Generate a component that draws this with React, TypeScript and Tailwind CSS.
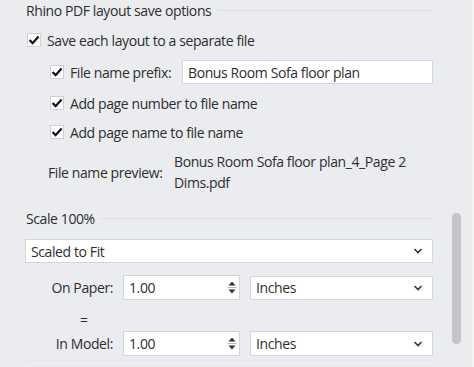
import React from "react";

const font = { fontFamily: '"Open Sans", "Noto Sans", sans-serif' };

function Check() {
  return (
    <span className="flex h-[14px] w-[14px] shrink-0 items-center justify-center border border-[#cdd0d4] bg-white">
      <svg width="12" height="12" viewBox="0 0 12 12">
        <path d="M1.6 6 L4.6 9.2 L10.6 2.4" fill="none" stroke="#111" strokeWidth="2.2" />
      </svg>
    </span>
  );
}

function Chevron() {
  return (
    <svg width="10" height="6" viewBox="0 0 10 6" className="ml-auto">
      <path d="M1.5 1 L5 4.5 L8.5 1" fill="none" stroke="#333" strokeWidth="1.6" />
    </svg>
  );
}

function Select({ value, className }: { value: string; className: string }) {
  return (
    <div className={"flex items-center border border-[#d3d6da] bg-white pl-[5px] pr-[9px] " + className}>
      <span>{value}</span>
      <Chevron />
    </div>
  );
}

function Spin({ value }: { value: string }) {
  return (
    <div className="flex h-[25px] w-[117px] items-stretch border border-[#d3d6da] bg-white">
      <span className="flex flex-1 items-center pl-[5px]">{value}</span>
      <span className="flex w-[14px] flex-col items-center justify-center gap-[1px]">
        <svg width="8" height="5" viewBox="0 0 8 5">
          <path d="M0.5 4.5 L4 0.5 L7.5 4.5 Z" fill="#333" />
        </svg>
        <span className="h-px w-[10px] bg-[#b9bcc0]" />
        <svg width="8" height="5" viewBox="0 0 8 5">
          <path d="M0.5 0.5 L4 4.5 L7.5 0.5 Z" fill="#333" />
        </svg>
      </span>
    </div>
  );
}

export default function App() {
  return (
    <div
      className="flex h-[367px] w-[474px] overflow-hidden bg-[#f4f4f5] text-[14px] tracking-[-0.4px] text-[#2e2e2e]"
      style={font}
    >
      <div className="flex w-[472px] bg-[#ebecef]">
        <div className="flex w-[433px] flex-col pl-[26px]">
          {/* Header */}
          <div className="flex h-[20px] items-center gap-[6px]">
            <span className="whitespace-nowrap">Rhino PDF layout save options</span>
            <span className="h-px flex-1 bg-[#dcdee2]" />
          </div>

          <div className="mt-[10px] flex h-[20px] items-center gap-[6px] pl-[1px]">
            <Check />
            <span>Save each layout to a separate file</span>
          </div>

          <div className="mt-[10px] flex h-[24px] items-center pl-[24px]">
            <Check />
            <span className="ml-[6px] w-[112px]">File name prefix:</span>
            <div className="flex h-[24px] flex-1 items-center border border-[#d3d6da] bg-white pl-[5px]">
              Bonus Room Sofa floor plan
            </div>
          </div>

          <div className="mt-[9px] flex h-[20px] items-center gap-[6px] pl-[24px]">
            <Check />
            <span>Add page number to file name</span>
          </div>

          <div className="mt-[9px] flex h-[20px] items-center gap-[6px] pl-[24px]">
            <Check />
            <span>Add page name to file name</span>
          </div>

          <div className="mt-[9px] flex items-center pl-[22px]">
            <span className="w-[126px]">File name preview:</span>
            <span className="w-[245px] leading-[21px]">Bonus Room Sofa floor plan_4_Page 2 Dims.pdf</span>
          </div>

          {/* Scale */}
          <div className="mt-[15px] flex h-[20px] items-center gap-[6px]">
            <span className="whitespace-nowrap">Scale 100%</span>
            <span className="h-px flex-1 bg-[#dcdee2]" />
          </div>

          <Select value="Scaled to Fit" className="-ml-px mt-[11px] h-[24px]" />

          <div className="mt-[12px] flex items-center">
            <span className="w-[87px] text-right">On Paper:</span>
            <div className="ml-[10px]">
              <Spin value="1.00" />
            </div>
            <Select value="Inches" className="ml-[10px] h-[24px] flex-1" />
          </div>

          <div className="mt-[9px] flex h-[20px] items-center pl-[54px]">=</div>

          <div className="mt-[2px] flex items-center">
            <span className="w-[87px] text-right">In Model:</span>
            <div className="ml-[10px]">
              <Spin value="1.00" />
            </div>
            <Select value="Inches" className="ml-[10px] h-[25px] flex-1" />
          </div>

          <div className="mt-auto h-[7px] border-t border-[#e4e6e9]" />
        </div>

        {/* Scrollbar */}
        <div className="flex flex-1 justify-center pt-[213px]">
          <div className="ml-[8px] h-[131px] w-[9px] rounded-full bg-[#c2c4c7]" />
        </div>
      </div>
    </div>
  );
}
